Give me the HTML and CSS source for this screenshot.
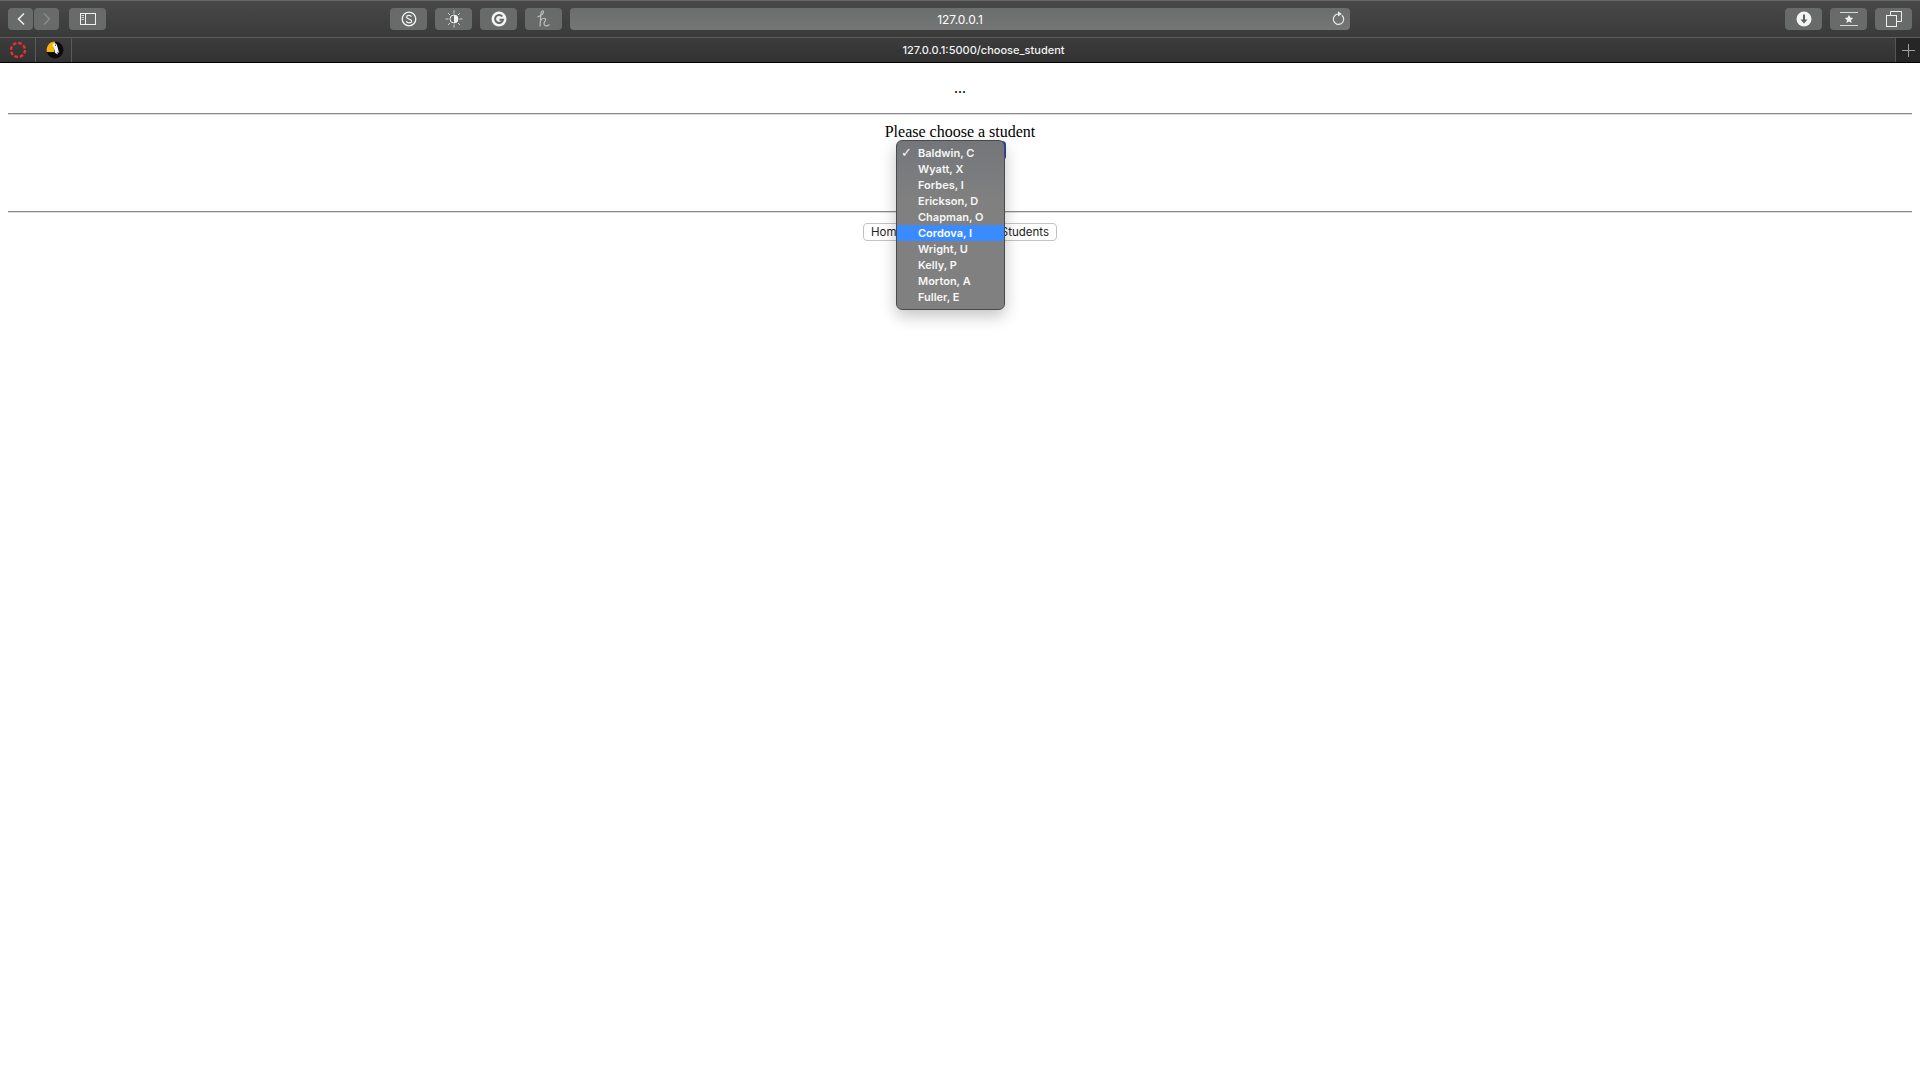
FILE: index.html

```html
<!DOCTYPE html>
<html>
<head>
    <meta charset="utf-8" />
    <title>127.0.0.1:5000/choose_student</title>
    <link rel="stylesheet" href="styles.css">
</head>
<body>
<!-- Browser toolbar -->
<div class="toolbar">
    <div class="toolbar-left">
        <div class="nav-group">
            <div class="history-btns">
                <div class="tool-btn history">
                    <svg width="10" height="14" viewBox="0 0 10 14"><path d="M8 1.500 2.500 7 8 12.500" fill="none" stroke="#f2f2f2" stroke-width="1.500"/></svg>
                </div>
                <div class="tool-btn history">
                    <svg width="10" height="14" viewBox="0 0 10 14"><path d="M2 1.500 7.500 7 2 12.500" fill="none" stroke="#8b8b8b" stroke-width="1.500"/></svg>
                </div>
            </div>
            <div class="tool-btn">
                <svg width="16" height="12" viewBox="0 0 16 12">
                    <rect x="0.500" y="0.500" width="15" height="11" fill="none" stroke="#efefef"/>
                    <path d="M5.500 0.500v11" stroke="#efefef"/>
                    <path d="M1.500 2.500h2.500M1.500 4.500h2.500M1.500 6.500h2.500" stroke="#cfcfcf"/>
                </svg>
            </div>
        </div>
        <div class="extensions">
            <div class="tool-btn">
                <svg width="16" height="16" viewBox="0 0 16 16">
                    <circle cx="8" cy="8" r="6.800" fill="none" stroke="#f4f4f4" stroke-width="1.300"/>
                    <path d="M10.500 5.600C9.800 4.600 8.900 4.300 8 4.300 6.600 4.300 5.600 5 5.600 6.100c0 2.600 5 1.300 5 3.800 0 1.200-1.100 1.900-2.600 1.900-1.100 0-2.100-.4-2.800-1.400" fill="none" stroke="#f4f4f4" stroke-width="1.200"/>
                </svg>
            </div>
            <div class="tool-btn">
                <svg width="18" height="18" viewBox="0 0 18 18">
                    <circle cx="9" cy="9" r="4" fill="none" stroke="#e8e8e8"/>
                    <path d="M9 5a4 4 0 0 1 0 8z" fill="#f2f2f2"/>
                    <path d="M9 .5v3M9 14.500v3M.5 9h3M14.500 9h3M3 3l2 2M13 13l2 2M3 15l2-2M13 5l2-2" stroke="#cfcfcf"/>
                </svg>
            </div>
            <div class="tool-btn">
                <svg width="16" height="16" viewBox="0 0 16 16">
                    <circle cx="8" cy="8" r="7.500" fill="#f4f4f4"/>
                    <path d="M11.300 5.500A4 4 0 1 0 12 8.800H8.500" fill="none" stroke="#6a6a6a" stroke-width="2"/>
                </svg>
            </div>
            <div class="tool-btn">
                <svg width="15" height="18" viewBox="0 0 15 18">
                    <path d="M1.500 7C4 6 7.500 4 7.500 2 7.500.5 5.500.5 5 3 4.500 6 4.500 12 4 16.500M4.300 11C5.500 8.500 8.500 7.500 9.500 9 10.500 10.500 7.500 12 8 14 8.500 16.500 11 16.500 13.500 14.500" fill="none" stroke="#bdbdbd" stroke-width="1.200"/>
                </svg>
            </div>
        </div>
    </div>
    <div class="url-bar">
        <span class="url-text">127.0.0.1</span>
        <svg class="reload" width="13" height="15" viewBox="0 0 13 15">
            <path d="M9.800 4.200A5.200 5.200 0 1 1 6.500 3" fill="none" stroke="#e8e8e8" stroke-width="1.200"/>
            <path d="M6 .3 9.800 3 6 5.500z" fill="#e8e8e8"/>
        </svg>
    </div>
    <div class="toolbar-right">
        <div class="tool-btn">
            <svg width="16" height="16" viewBox="0 0 16 16">
                <circle cx="8" cy="8" r="7.500" fill="#f4f4f4"/>
                <path d="M8 3.500v6" stroke="#5f5f5f" stroke-width="2"/>
                <path d="M4.500 8.500h7L8 12.500z" fill="#5f5f5f"/>
            </svg>
        </div>
        <div class="tool-btn">
            <svg width="18" height="14" viewBox="0 0 18 14">
                <path d="M0 .5h18M0 13.500h18" stroke="#d8d8d8"/>
                <path d="M9 2.800l1.300 2.800 3 .3-2.300 2 .7 3L9 9.400l-2.700 1.500.7-3-2.300-2 3-.3z" fill="#f0f0f0"/>
            </svg>
        </div>
        <div class="tool-btn">
            <svg width="16" height="16" viewBox="0 0 16 16">
                <rect x="0.500" y="4.500" width="10" height="11" fill="none" stroke="#efefef"/>
                <path d="M4.500 4.500v-4h11v10h-5" fill="none" stroke="#efefef"/>
            </svg>
        </div>
    </div>
</div>

<!-- Tab bar -->
<div class="tab-bar">
    <div class="pinned-tab">
        <svg width="18" height="18" viewBox="0 0 18 18"><circle cx="9" cy="9" r="7" fill="none" stroke="#e8322c" stroke-width="2.400" stroke-dasharray="3.600 1.900"/></svg>
    </div>
    <div class="pinned-tab">
        <svg class="bird-icon" width="18" height="18" viewBox="0 0 18 18">
            <circle cx="9" cy="9" r="8.500" fill="#0c0c0c"/>
            <path d="M.8 11A8.500 8.500 0 0 1 9 .5L8 11z" fill="#f5b60a"/>
            <path d="M7.500 2.500c1.800-1 3.400.2 3.600 2l2 7.500-1.800-.9.500 2.400-2.800-1.800L7.800 6 6.300 4.300z" fill="#f6f6f6"/>
            <path d="M9 4.200h1" stroke="#111"/>
        </svg>
    </div>
    <div class="tab-title">127.0.0.1:5000/choose_student</div>
    <div class="new-tab">
        <svg width="13" height="13" viewBox="0 0 13 13"><path d="M6.500 0v13M0 6.500h13" stroke="#a0a0a0"/></svg>
    </div>
</div>

<!-- Page -->
<div class="page">
    <p class="dots">...</p>
    <hr>
    <div class="choose-form">
        <div>Please choose a student</div>
        <div class="select-wrap">
            <select class="student-select">
                <option>Baldwin, C</option>
            </select>
            <ul class="select-menu">
                <li class="checked">Baldwin, C</li>
                <li>Wyatt, X</li>
                <li>Forbes, I</li>
                <li>Erickson, D</li>
                <li>Chapman, O</li>
                <li class="active">Cordova, I</li>
                <li>Wright, U</li>
                <li>Kelly, P</li>
                <li>Morton, A</li>
                <li>Fuller, E</li>
            </ul>
        </div>
    </div>
    <hr>
    <div class="page-buttons">
        <button class="home-btn">Home</button>
        <button class="students-btn">Students</button>
    </div>
</div>
</body>
</html>
```

FILE: styles.css

```css
* {
  box-sizing: border-box;
}
body {
  margin: 0;
  background-color: #fff;
  color: #000;
  font-family: "Liberation Serif", "Times New Roman", serif;
  font-size: 16px;
}

/* ============ Browser toolbar ============ */
.toolbar {
  height: 38px;
  display: grid;
  grid-template-columns: 1fr 780px 1fr;
  align-items: center;
  padding: 0 8px 0;
  background: linear-gradient(#484848, #3a3a3a);
  border-top: 1px solid #666;
  border-bottom: 1px solid #5c5c5c;
  font-family: Inter, "Noto Sans", sans-serif;
}
.toolbar-left {
  display: flex;
  justify-content: space-between;
  padding-right: 8px;
}
.toolbar-right {
  display: flex;
  justify-content: flex-end;
  gap: 8px;
}
.nav-group {
  display: flex;
  gap: 10px;
}
.history-btns {
  display: flex;
  gap: 1px;
}
.extensions {
  display: flex;
  gap: 8px;
}
.tool-btn {
  width: 37px;
  height: 22px;
  display: flex;
  align-items: center;
  justify-content: center;
  background-color: #696a6a;
  border-radius: 4px;
}
.tool-btn.history {
  width: 25px;
}
.url-bar {
  height: 22px;
  display: flex;
  align-items: center;
  justify-content: center;
  position: relative;
  background: linear-gradient(#6c6d6d, #747575);
  border-radius: 4px;
}
.url-text {
  color: #fff;
  font-size: 12px;
  font-weight: 400;
}
.reload {
  position: absolute;
  right: 5px;
  top: 3px;
}

/* ============ Tab bar ============ */
.tab-bar {
  height: 25px;
  display: flex;
  background: linear-gradient(#3c3c3c, #323232);
  border-bottom: 1px solid #000;
  font-family: Inter, "Noto Sans", sans-serif;
}
.pinned-tab {
  width: 36px;
  display: flex;
  align-items: center;
  justify-content: center;
  border-right: 1px solid #5a5a5a;
}
.bird-icon {
  margin-left: 3px;
  margin-bottom: 1px;
}
.tab-title {
  flex: 1;
  text-align: center;
  line-height: 24px;
  color: #f2f2f2;
  font-size: 11px;
  font-weight: 500;
}
.new-tab {
  width: 25px;
  display: flex;
  align-items: center;
  justify-content: center;
  background-color: #262626;
  border-left: 1px solid #555;
}

/* ============ Page ============ */
.page {
  min-height: calc(100vh - 63px);
  padding: 0 8px;
  text-align: center;
}
.dots {
  margin: 16px 0;
}
hr {
  height: 2px;
  margin: 16px 0 8px;
  border: none;
  border-top: 1px solid #8c8c8c;
  border-bottom: 1px solid #dcdcdc;
}
.choose-form {
  height: 88px;
}
.choose-form + hr {
  margin-top: 0;
}
.select-wrap {
  position: relative;
  width: 92px;
  height: 19px;
  margin: 0 auto;
}
.student-select {
  appearance: none;
  display: block;
  width: 100%;
  height: 100%;
  border: none;
  border-radius: 4px;
  background-color: #1b3fc4;
}

/* Open popup of the select, lies over the page */
.select-menu {
  position: absolute;
  z-index: 5;
  top: -1px;
  left: -18px;
  width: 109px;
  margin: 0;
  padding: 4px 0;
  list-style: none;
  text-align: left;
  background: linear-gradient(#74767a, #808080 35%);
  border: 1px solid #4a4a4a;
  border-radius: 6px;
  box-shadow: 0 6px 16px rgba(0, 0, 0, 0.24);
  color: #f6f6f6;
  font-family: Inter, "Noto Sans", sans-serif;
  font-size: 11px;
  font-weight: 600;
}
.select-menu li {
  position: relative;
  height: 16px;
  line-height: 16px;
  padding-left: 21px;
}
.select-menu li.active {
  background-color: #3a8bff;
  color: #fff;
}
.select-menu li.checked:before {
  content: "✓";
  position: absolute;
  left: 4px;
  font-family: "DejaVu Sans", sans-serif;
  font-size: 13px;
  font-weight: 700;
}

.page-buttons {
  display: flex;
  justify-content: space-between;
  width: 194px;
  margin: 10px auto 0;
}
.page-buttons button {
  height: 18px;
  padding: 0 7px;
  background-color: #fff;
  border: 1px solid #c4c4c4;
  border-radius: 4px;
  color: #222;
  font-family: Inter, "Noto Sans", sans-serif;
  font-size: 11.5px;
}
.students-btn {
  width: 90px;
  text-align: right;
}
```
